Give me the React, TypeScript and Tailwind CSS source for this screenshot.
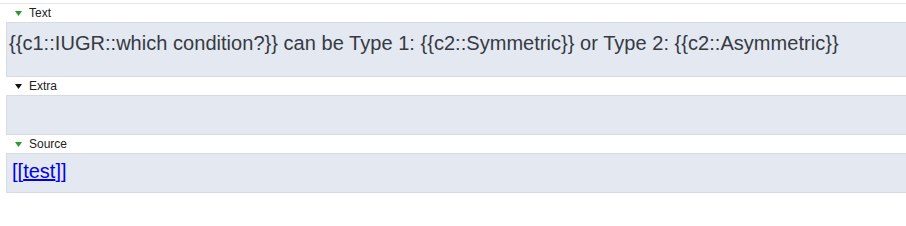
function Triangle({ green }: { green: boolean }) {
  return (
    <svg width="7" height="5" viewBox="0 0 7 5" className="shrink-0">
      <polygon points="0,0 7,0 3.5,5" fill={green ? '#2a9b2a' : '#111111'} />
    </svg>
  );
}

function Field({
  label,
  green,
  box,
  children,
}: {
  label: string;
  green: boolean;
  box: string;
  children?: React.ReactNode;
}) {
  return (
    <div className="flex flex-col">
      <div className="flex h-[18px] items-center gap-[7px] pl-[9px] text-[12px] text-[#222]">
        <Triangle green={green} />
        <span>{label}</span>
      </div>
      <div className={`border-y border-l border-[#d5dae3] bg-[#e4e8f0] text-[20px] text-[#353a43] ${box}`}>
        {children}
      </div>
    </div>
  );
}

export default function App() {
  return (
    <div className="h-[226px] w-[906px] overflow-hidden bg-white font-['Liberation_Sans',Arial,sans-serif]">
      <div className="h-[4px] border-b border-[#e6e6e6]" />
      <div className="flex flex-col pl-[6px]">
        <Field label="Text" green box="h-[55px] pl-[2px] pt-[5px] tracking-[0.035px]">
          {'{{c1::IUGR::which condition?}} can be Type 1: {{c2::Symmetric}} or Type 2: {{c2::Asymmetric}}'}
        </Field>
        <Field label="Extra" green={false} box="h-[40px]" />
        <Field label="Source" green box="h-[40px] pl-[5px] pt-[2px]">
          <span className="text-[#0000ee]">
            [[<a className="underline">test</a>]]
          </span>
        </Field>
      </div>
    </div>
  );
}
